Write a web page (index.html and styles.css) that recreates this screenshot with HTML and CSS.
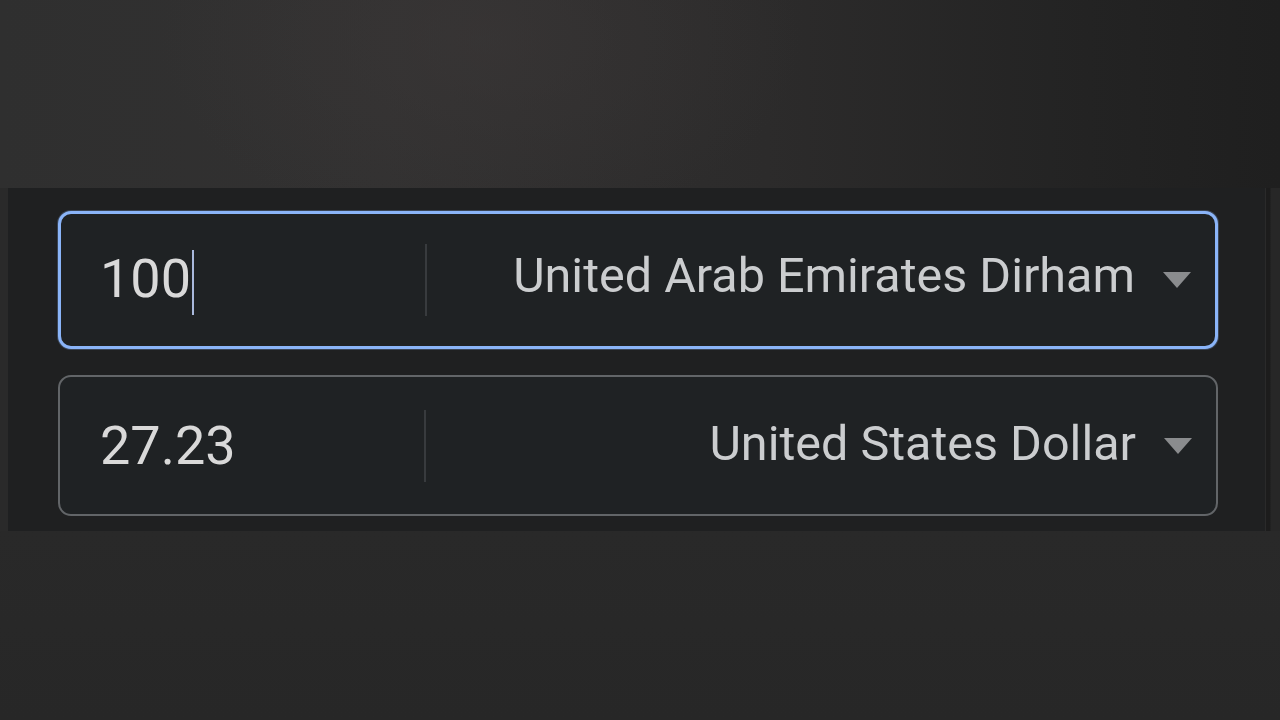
FILE: index.html
```html
<!DOCTYPE html>
<html>
<head>
<meta charset="utf-8">
<link rel="stylesheet" href="styles.css">
</head>
<body>
<div class="stage">
  <div class="panel">
    <div class="field focused">
      <div class="amount"><span class="value">100</span><span class="caret"></span></div>
      <div class="sep"></div>
      <div class="currency">
        <span class="cname">United Arab Emirates Dirham</span>
        <svg class="arrow" width="30" height="18" viewBox="0 0 30 18"><path d="M1 1 L29 1 L15 17 Z" fill="#8a8c8e"/></svg>
      </div>
    </div>
    <div class="field">
      <div class="amount"><span class="value">27.23</span></div>
      <div class="sep"></div>
      <div class="currency">
        <span class="cname">United States Dollar</span>
        <svg class="arrow" width="30" height="18" viewBox="0 0 30 18"><path d="M1 1 L29 1 L15 17 Z" fill="#8a8c8e"/></svg>
      </div>
    </div>
  </div>
</div>
</body>
</html>
```
FILE: styles.css
```css
html, body {
  margin: 0;
  padding: 0;
}
body {
  width: 1280px;
  height: 720px;
  overflow: hidden;
  background:
    radial-gradient(ellipse 320px 200px at 480px 40px, rgba(60,56,56,0.55) 0%, rgba(60,56,56,0) 100%) 0 0 / 1280px 188px no-repeat,
    linear-gradient(90deg, #2f2f2f 0%, #323131 30%, #2c2b2b 60%, #232323 85%, #1f1f1f 100%) 0 0 / 1280px 188px no-repeat,
    linear-gradient(180deg, #292929 0%, #272727 100%) 0 531px / 1280px 189px no-repeat,
    linear-gradient(90deg, #2a2a2a 0%, #2a2a2a 1266px, #1c1c1c 1266px, #1c1c1c 1270px, #272727 1271px) #272727;
  font-family: Roboto, "Liberation Sans", sans-serif;
}
.stage {
  padding-top: 188px;
  padding-left: 8px;
}
.panel {
  width: 1257px;
  height: 343px;
  box-sizing: border-box;
  background: #1f2021;
  padding: 23px 0 0 50px;
  display: flex;
  flex-direction: column;
  gap: 26px;
}
.field {
  width: 1160px;
  height: 141px;
  box-sizing: border-box;
  border: 2px solid #626568;
  border-radius: 13px;
  background: #1f2224;
  display: flex;
  align-items: center;
}
.field.focused {
  height: 138px;
  border: 3px solid #8ab4f8;
  box-shadow: 0 0 0 1px rgba(138,180,248,0.25);
}
.amount {
  width: 364px;
  box-sizing: border-box;
  padding-left: 40px;
  display: flex;
  align-items: center;
  color: #d9d9d9;
  font-size: 54px;
}
.field.focused .amount {
  padding-left: 39px;
  margin-bottom: 4px;
}
.caret {
  display: inline-block;
  width: 2px;
  height: 65px;
  background: #a9b9dc;
  margin-left: 1px;
  margin-top: 8px;
}
.sep {
  width: 2px;
  height: 72px;
  background: #383b3e;
}
.currency {
  flex: 1;
  display: flex;
  align-items: center;
  justify-content: flex-end;
  padding-right: 23px;
  color: #cbcdcf;
  font-size: 48.5px;
}
.field.focused .cname { margin-bottom: 10px; }
.field .cname { margin-bottom: 4px; }
.arrow {
  margin-left: 27px;
}
```
